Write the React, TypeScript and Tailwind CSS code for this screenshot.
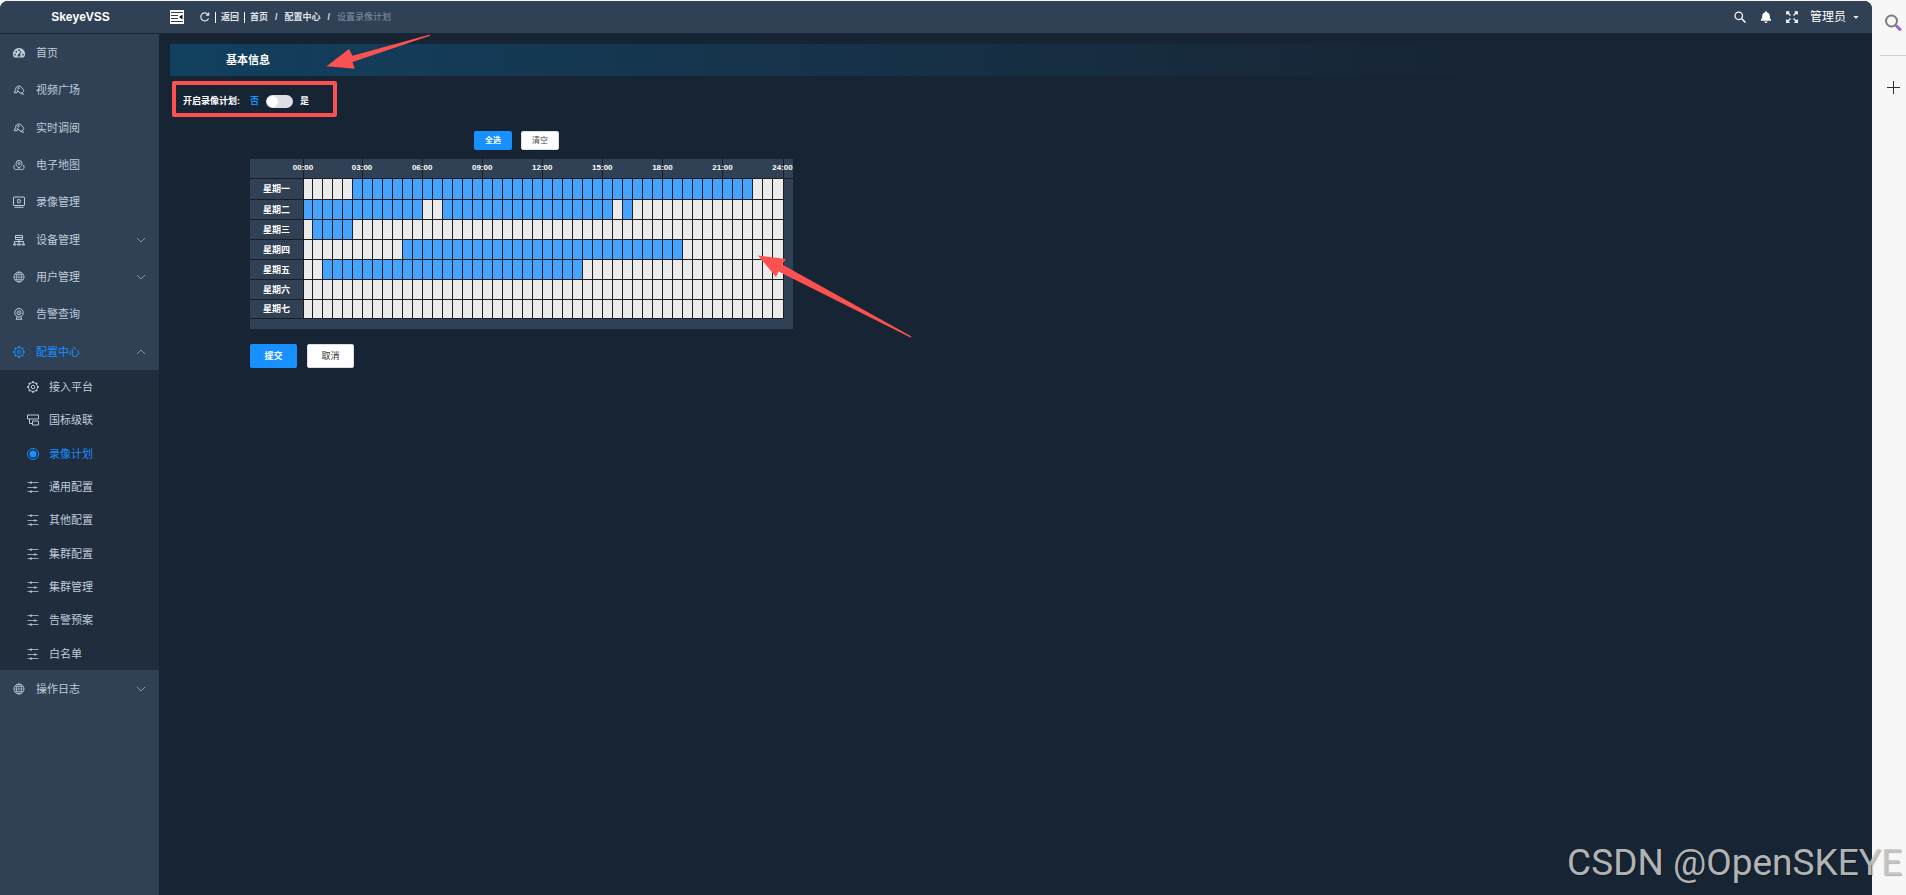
import { useState, type ComponentType, type ReactNode } from "react";
import { FaBell, FaCaretDown } from "react-icons/fa";

type IconProps = { className?: string };

const Svg = ({
  className = "size-3",
  children,
}: IconProps & { children: ReactNode }) => (
  <svg
    viewBox="0 0 24 24"
    className={`${className} shrink-0`}
    fill="none"
    stroke="currentColor"
    strokeWidth="2"
    aria-hidden="true"
  >
    {children}
  </svg>
);

const DashboardIcon = ({ className }: IconProps) => (
  <Svg className={className}>
    <path
      fill="currentColor"
      stroke="none"
      fillRule="evenodd"
      d="M12 2a12 12 0 0 0-10.300 18.200c.3.500.8.800 1.400.8h17.800c.6 0 1.100-.3 1.400-.8A12 12 0 0 0 12 2Zm0 2.600a1.700 1.700 0 1 1 0 3.400 1.700 1.700 0 0 1 0-3.400ZM4 17a1.700 1.700 0 1 1 0-3.400A1.700 1.700 0 0 1 4 17Zm2.500-6a1.700 1.700 0 1 1 0-3.400 1.700 1.700 0 0 1 0 3.400Zm7.700 7.800H9.800a3 3 0 0 1 2.300-4.700l2.900-6.600 1.600.6-2.500 7c.8.900.9 2.500.1 3.700ZM20 17a1.700 1.700 0 1 1 0-3.400 1.700 1.700 0 0 1 0 3.400Z"
    />
  </Svg>
);

const CameraIcon = ({ className }: IconProps) => (
  <Svg className={className}>
    <path d="M5 11c0-4 3-7 7-7 2 0 3 .500 4 1.500l5 6c1 1.500.500 3-.500 4l-3 2.500c-1 .8-2 .8-3 0L7 12" />
    <path d="M5 11l-2.500 6.500H8l2-4M15 18.500c1.500 1.500 4 2 7 1.500" />
    <circle cx="11" cy="8.500" r="1.500" />
  </Svg>
);

const MapIcon = ({ className }: IconProps) => (
  <Svg className={className}>
    <path d="M12 18c-4-3.500-6-5.500-6-9a6 6 0 0 1 12 0c0 3.500-2 5.500-6 9Z" />
    <path d="M3 12c-1.500 3-1.500 6 0 8 1.500 1.500 3 1.500 5 1l4-1 4 1c2 .500 3.500.500 5-1 1.500-2 1.500-5 0-8" />
    <circle cx="12" cy="9" r="2" />
  </Svg>
);

const RecordIcon = ({ className }: IconProps) => (
  <Svg className={className}>
    <rect x="1" y="2" width="22" height="17" rx="1" />
    <path d="M3 22.500h18" />
    <path d="M9.500 7v7h2a3.500 3.500 0 0 0 0-7Z" />
  </Svg>
);

const DeviceIcon = ({ className }: IconProps) => (
  <Svg className={className}>
    <path d="M5 3h14v8H5zM5 7h14M12 11v4M3 19v-4h18v4M12 15v4M1 20h5v2H1zM9 20h6v2H9zM18 20h5v2h-5z" />
  </Svg>
);

const GlobeIcon = ({ className }: IconProps) => (
  <Svg className={className}>
    <circle cx="12" cy="12" r="10" strokeWidth="1.800" />
    <ellipse cx="12" cy="12" rx="5" ry="10" strokeWidth="1.500" />
    <path d="M12 2v20M2 12h20M4 7h16M4 17h16" strokeWidth="1.200" />
  </Svg>
);

const AlarmIcon = ({ className }: IconProps) => (
  <Svg className={className}>
    <circle cx="12" cy="9.500" r="8.500" />
    <circle cx="12" cy="9.500" r="4" />
    <path d="M8 17.500V20l-2 2.500h12L16 20v-2.500M10.500 9.500h3" />
  </Svg>
);

const GearIcon = ({ className }: IconProps) => (
  <Svg className={className}>
    <circle cx="12" cy="12" r="9" />
    <circle cx="12" cy="12" r="3.500" />
    <path
      strokeWidth="4"
      d="M12 .5v2.500M12 21v2.500M.5 12H3M21 12h2.500M3.900 3.900l1.700 1.700M18.400 18.400l1.700 1.700M3.900 20.100l1.700-1.700M18.400 5.600l1.700-1.700"
    />
  </Svg>
);

const CascadeIcon = ({ className }: IconProps) => (
  <Svg className={className}>
    <path d="M1 2h22v8H1zM5 10v9h6M11 14h12v8H11z" />
  </Svg>
);

const PlanIcon = ({ className }: IconProps) => (
  <Svg className={className}>
    <circle cx="12" cy="12" r="11" />
    <circle cx="12" cy="12" r="7" fill="currentColor" stroke="none" />
  </Svg>
);

const SlidersIcon = ({ className }: IconProps) => (
  <Svg className={className}>
    <path d="M1 3h22M1 13h20M1 21h22" strokeWidth="1.500" />
    <path d="M8 1v4.500M16 11v4M8 19v4.500" strokeWidth="3" />
  </Svg>
);

const Chevron = ({ up = false }: { up?: boolean }) => (
  <svg
    viewBox="0 0 8 8"
    className="size-2 shrink-0 text-[#8a94a2]"
    fill="none"
    stroke="currentColor"
    aria-hidden="true"
  >
    <path d={up ? "M0 6l4-4 4 4" : "M0 2l4 4 4-4"} />
  </svg>
);

type MenuItem = {
  label: string;
  icon: ComponentType<IconProps>;
  arrow?: "up" | "down";
  active?: boolean;
};

const mainMenu: MenuItem[] = [
  { label: "首页", icon: DashboardIcon },
  { label: "视频广场", icon: CameraIcon },
  { label: "实时调阅", icon: CameraIcon },
  { label: "电子地图", icon: MapIcon },
  { label: "录像管理", icon: RecordIcon },
  { label: "设备管理", icon: DeviceIcon, arrow: "down" },
  { label: "用户管理", icon: GlobeIcon, arrow: "down" },
  { label: "告警查询", icon: AlarmIcon },
  { label: "配置中心", icon: GearIcon, arrow: "up", active: true },
];

const configMenu: MenuItem[] = [
  { label: "接入平台", icon: GearIcon },
  { label: "国标级联", icon: CascadeIcon },
  { label: "录像计划", icon: PlanIcon, active: true },
  { label: "通用配置", icon: SlidersIcon },
  { label: "其他配置", icon: SlidersIcon },
  { label: "集群配置", icon: SlidersIcon },
  { label: "集群管理", icon: SlidersIcon },
  { label: "告警预案", icon: SlidersIcon },
  { label: "白名单", icon: SlidersIcon },
];

const logMenu: MenuItem = { label: "操作日志", icon: GlobeIcon, arrow: "down" };

const MenuLink = ({ item, sub = false }: { item: MenuItem; sub?: boolean }) => {
  const Icon = item.icon;
  return (
    <a
      href="#"
      className={`flex h-full items-center pt-px pr-3.5 text-[11px] leading-4 ${sub ? "gap-2.5 pl-[27px]" : "gap-[11px] pl-[13px]"} ${item.active ? "text-[#1890ff]" : "text-[#bfcbd9]"}`}
    >
      <Icon className="size-3" />
      <span className="flex-1">{item.label}</span>
      {item.arrow && <Chevron up={item.arrow === "up"} />}
    </a>
  );
};

const Sidebar = () => (
  <nav className="w-[159px] shrink-0 bg-[#304156]">
    <ul className="grid h-[336px] auto-rows-fr">
      {mainMenu.map((item) => (
        <li key={item.label}>
          <MenuLink item={item} />
        </li>
      ))}
    </ul>
    <ul className="grid h-[300px] auto-rows-fr bg-[#1f2d3d]">
      {configMenu.map((item) => (
        <li key={item.label}>
          <MenuLink item={item} sub />
        </li>
      ))}
    </ul>
    <div className="h-[37px]">
      <MenuLink item={logMenu} />
    </div>
  </nav>
);

const Header = () => (
  <header className="flex h-8 items-center bg-[#304156] text-white">
    <div className="w-[159px] shrink-0 text-center text-xs font-bold">
      <span className="pl-0.5">SkeyeVSS</span>
    </div>
    <button type="button" aria-label="折叠菜单" className="ml-[11px]">
      <svg viewBox="0 0 14 14" className="size-3.5" aria-hidden="true">
        <path fill="#fff" d="M0 0h14v14H0z" />
        <path
          stroke="#304156"
          strokeWidth="1"
          d="M1 2.500h12M1 5.500h7M1 8.500h7M1 11.500h12"
        />
        <path fill="#111" d="M12.500 4.500v5L9 7z" />
      </svg>
    </button>
    <div className="ml-4 flex items-center text-[9px] leading-3 font-bold text-[#dfe4ea]">
      <button type="button" aria-label="刷新">
        <svg
          viewBox="0 0 10 10"
          className="size-2.5"
          fill="none"
          stroke="currentColor"
          strokeWidth="1.200"
          aria-hidden="true"
        >
          <path d="M8.500 6.500A4 4 0 1 1 8 2.500M8.700.5v2.700H6" />
        </svg>
      </button>
      <i className="mx-[5px] h-[11px] w-px bg-white" />
      <a href="#">返回</a>
      <i className="mx-[5px] h-[11px] w-px bg-white" />
      <nav className="flex gap-[7px]">
        <a href="#">首页</a>
        <span>/</span>
        <a href="#">配置中心</a>
        <span>/</span>
        <span className="font-normal text-[#8391a3]">设置录像计划</span>
      </nav>
    </div>
    <div className="mr-3 ml-auto flex items-center gap-3.5">
      <button type="button" aria-label="搜索">
        <Svg className="size-3">
          <circle cx="9.500" cy="9.500" r="7.500" strokeWidth="2.500" />
          <path d="M15 15l8 8" strokeWidth="3" />
        </Svg>
      </button>
      <button type="button" aria-label="通知">
        <FaBell className="size-3" />
      </button>
      <button type="button" aria-label="全屏">
        <Svg className="size-3">
          <path
            d="M1.500 7V1.500H7M17 1.500h5.500V7M22.500 17v5.500H17M7 22.500H1.500V17M2 2l7 7M22 2l-7 7M22 22l-7-7M2 22l7-7"
            strokeWidth="2.500"
          />
        </Svg>
      </button>
      <button type="button" className="-ml-0.5 flex items-center gap-1.5 text-xs">
        管理员
        <FaCaretDown className="size-2" />
      </button>
    </div>
  </header>
);

// half-hour slots, [from, to)
const week: { day: string; ranges: [number, number][] }[] = [
  { day: "星期一", ranges: [[5, 45]] },
  {
    day: "星期二",
    ranges: [
      [0, 12],
      [14, 31],
      [32, 33],
    ],
  },
  { day: "星期三", ranges: [[1, 5]] },
  { day: "星期四", ranges: [[10, 38]] },
  { day: "星期五", ranges: [[2, 28]] },
  { day: "星期六", ranges: [] },
  { day: "星期七", ranges: [] },
];

const slots = Array.from({ length: 48 }, (_, i) => i);
const hours = [
  "03:00",
  "06:00",
  "09:00",
  "12:00",
  "15:00",
  "18:00",
  "21:00",
  "24:00",
];

const initialPlan = week.map(({ ranges }) =>
  slots.map((slot) => ranges.some(([from, to]) => slot >= from && slot < to)),
);

const HourLabel = ({ children }: { children: ReactNode }) => (
  <span className="absolute top-[3px] right-0 translate-x-1/2">{children}</span>
);

const PlanTable = ({
  plan,
  onToggle,
}: {
  plan: boolean[][];
  onToggle: (row: number, slot: number) => void;
}) => (
  <div className="w-[543px] bg-[#304156] pb-2.5">
    <table className="w-full table-fixed border-separate border-spacing-0 text-white">
      <colgroup>
        <col className="w-[54px]" />
        {slots.map((slot) => (
          <col key={slot} className={slot === 0 ? "w-[9px]" : "w-[10px]"} />
        ))}
        <col className="w-[10px]" />
      </colgroup>
      <thead>
        <tr className="h-5 text-[8px] leading-3">
          <th
            scope="col"
            className="relative border-r border-b border-[#1c1c1c] p-0"
          >
            <HourLabel>00:00</HourLabel>
          </th>
          {hours.map((hour) => (
            <th
              key={hour}
              scope="colgroup"
              colSpan={6}
              className="relative border-r border-b border-[#1c1c1c] p-0"
            >
              <HourLabel>{hour}</HourLabel>
            </th>
          ))}
          <td className="border-b border-[#1c1c1c] p-0" />
        </tr>
      </thead>
      <tbody>
        {week.map(({ day }, row) => (
          <tr key={day} className="h-5 first:h-[21px] last:h-[19px]">
            <th
              scope="row"
              className="border-r border-b border-[#1c1c1c] p-0 text-[9px] leading-3"
            >
              {day}
            </th>
            {slots.map((slot) => (
              <td
                key={slot}
                onClick={() => onToggle(row, slot)}
                className={`border-r border-b border-[#1c1c1c] p-0 ${plan[row][slot] ? "bg-[#46a4ff]" : "bg-[#ebebeb]"}`}
              />
            ))}
            <td className="p-0" />
          </tr>
        ))}
      </tbody>
    </table>
  </div>
);

const RecordPlan = () => {
  const [enabled, setEnabled] = useState(false);
  const [plan, setPlan] = useState(initialPlan);

  const fillPlan = (value: boolean) =>
    setPlan((rows) => rows.map((cells) => cells.map(() => value)));

  const handleToggle = (row: number, slot: number) =>
    setPlan((rows) =>
      rows.map((cells, r) =>
        r === row ? cells.map((on, s) => (s === slot ? !on : on)) : cells,
      ),
    );

  return (
    <main className="relative min-w-0 flex-1 px-[11px] pt-2.5">
      <h1 className="flex h-8 items-center bg-linear-to-r from-[#11405f] to-[#172433] to-80% pl-14 text-[11px] leading-4 font-bold text-white">
        基本信息
      </h1>

      <div className="mt-[5px] ml-0.5 flex h-9 w-[165px] items-center rounded-xs border-4 border-[#fc5151] pt-1 pl-[7px] text-[9px] leading-3 font-bold text-white">
        <label htmlFor="plan-enabled">开启录像计划:</label>
        <span className={`ml-2.5 ${enabled ? "" : "text-[#1890ff]"}`}>否</span>
        <input
          id="plan-enabled"
          type="checkbox"
          role="switch"
          checked={enabled}
          onChange={(e) => setEnabled(e.target.checked)}
          className="mx-[7px] h-[13px] w-[27px] appearance-none rounded-full bg-[#dcdfe6] p-px before:block before:size-[11px] before:rounded-full before:bg-white checked:bg-[#1890ff] checked:before:ml-3.5"
        />
        <span className={enabled ? "text-[#1890ff]" : ""}>是</span>
      </div>

      <div className="mt-3.5 ml-20 w-[543px]">
        <div className="flex justify-center gap-[9px] pr-2.5 text-[8px] leading-3">
          <button
            type="button"
            onClick={() => fillPlan(true)}
            className="h-[19px] w-[38px] rounded-xs bg-[#1890ff] font-bold text-white"
          >
            全选
          </button>
          <button
            type="button"
            onClick={() => fillPlan(false)}
            className="h-[19px] w-[38px] rounded-xs border border-[#dcdfe6] bg-white text-[#4a4c50]"
          >
            清空
          </button>
        </div>
        <div className="mt-[9px]">
          <PlanTable plan={plan} onToggle={handleToggle} />
        </div>
        <div className="mt-[15px] flex gap-2.5 text-[9px] leading-3">
          <button
            type="button"
            className="h-6 w-[47px] rounded-xs bg-[#1890ff] font-bold text-white"
          >
            提交
          </button>
          <button
            type="button"
            className="h-6 w-[47px] rounded-xs border border-[#dcdfe6] bg-white text-[#303133]"
          >
            取消
          </button>
        </div>
      </div>

      <svg
        viewBox="326 34 106 36"
        className="pointer-events-none absolute top-0 left-[167px] h-9 w-[106px]"
        aria-hidden="true"
      >
        <path
          fill="#fc5151"
          d="M326.500 66.300 349 49l3.500 6.700L430 34.500v1.200L352.500 62l2.300 6.700Z"
        />
      </svg>
      <svg
        viewBox="757 254 156 85"
        className="pointer-events-none absolute top-[220px] left-[598px] h-[85px] w-[156px]"
        aria-hidden="true"
      >
        <path
          fill="#fc5151"
          d="M758 255.500 785.800 259l-3.600 5.500L911.500 336.500l-1 1-132-66-2.500 5.500Z"
        />
      </svg>
    </main>
  );
};

const BrowserRail = () => (
  <aside className="flex w-[34px] shrink-0 flex-col items-end bg-[#f7f7f7] pt-3.5">
    <button type="button" aria-label="搜索" className="mr-1">
      <svg viewBox="0 0 18 18" className="size-[18px]" fill="none" aria-hidden="true">
        <circle cx="7.500" cy="7" r="5.500" stroke="#7d7d7d" strokeWidth="2" />
        <path d="M11 10.500l2 2" stroke="#7d7d7d" strokeWidth="2" />
        <path
          d="M13 12.500l3 3"
          stroke="#9a63d8"
          strokeWidth="3"
          strokeLinecap="round"
        />
      </svg>
    </button>
    <hr className="mt-[23px] w-[26px] border-[#cfcfcf]" />
    <button type="button" aria-label="添加" className="mt-[25px] mr-1.5">
      <svg viewBox="0 0 13 13" className="size-[13px]" stroke="#333" aria-hidden="true">
        <path d="M6.500 0v13M0 6.500h13" />
      </svg>
    </button>
  </aside>
);

export default function App() {
  return (
    <div className="relative flex min-h-screen overflow-hidden bg-[#f7f7f7] font-['Liberation_Sans','Noto_Sans_CJK_SC',sans-serif]">
      <div className="mt-px flex min-w-0 flex-1 flex-col overflow-hidden rounded-t-lg bg-[#172433]">
        <Header />
        <div className="mt-px flex flex-1">
          <Sidebar />
          <RecordPlan />
        </div>
      </div>
      <BrowserRail />
      <p className="pointer-events-none absolute right-1 bottom-3 font-[Roboto,sans-serif] text-[37px] leading-10 text-[#c8c8c8]/90 [text-shadow:1px_1px_1px_rgb(0_0_0/0.3)]">
        CSDN @OpenSKEYE
      </p>
    </div>
  );
}
